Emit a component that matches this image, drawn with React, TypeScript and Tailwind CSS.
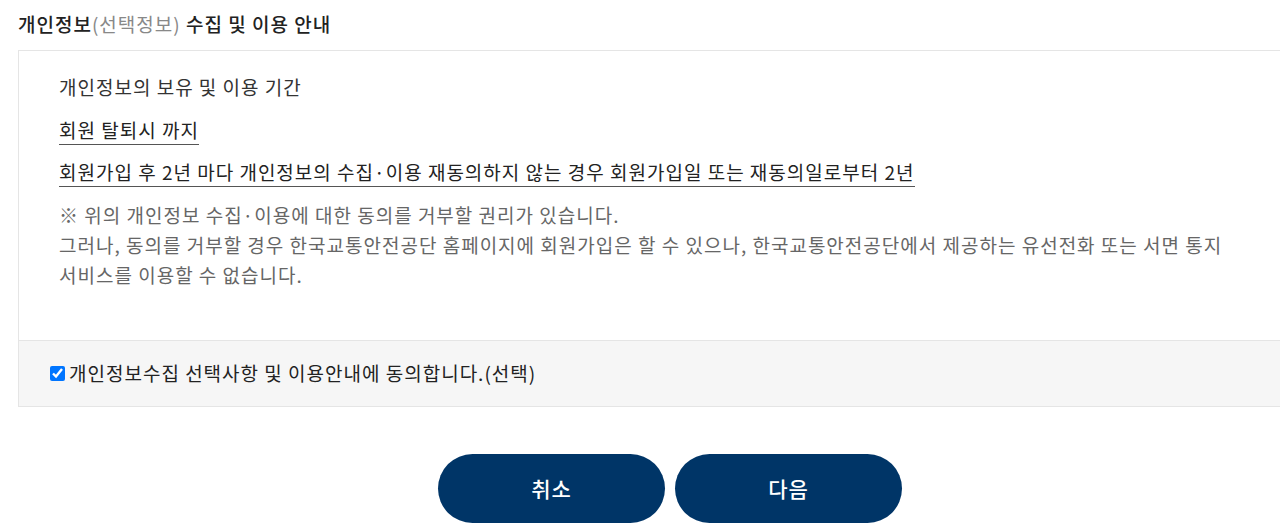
import React, { useState } from 'react';

const font = { fontFamily: '"Noto Sans CJK KR", "Noto Sans", sans-serif' };

export default function App() {
  const [agreed, setAgreed] = useState(true);

  return (
    <div className="w-full overflow-hidden bg-white tracking-[1px]" style={font}>
      <div className="ml-[18px] w-[1304px]">
        {/* Section title */}
        <h2 className="h-[50px] pt-[9px] text-[19px] leading-[30px] font-medium text-[#222]">
          개인정보<span className="font-normal text-[#888]">(선택정보)</span> 수집 및 이용 안내
        </h2>

        <div className="border border-[#e5e5e5]">
          <div className="px-[40px] pt-[21px] pb-[50px]">
            <p className="text-[19px] leading-[30px] text-[#333]">개인정보의 보유 및 이용 기간</p>

            <div className="mt-[14px]">
              <span className="inline-block border-b border-[#555] text-[19px] leading-[28px] text-[#222]">
                회원 탈퇴시 까지
              </span>
            </div>
            <div className="mt-[13px]">
              <span className="inline-block border-b border-[#555] text-[19px] leading-[28px] text-[#222]">
                회원가입 후 2년 마다 개인정보의 수집·이용 재동의하지 않는 경우 회원가입일 또는 재동의일로부터 2년
              </span>
            </div>

            <div className="mt-[13px] text-[19px] leading-[30px] text-[#666]">
              <p>※ 위의 개인정보 수집·이용에 대한 동의를 거부할 권리가 있습니다.</p>
              <p>
                그러나, 동의를 거부할 경우 한국교통안전공단 홈페이지에 회원가입은 할 수 있으나, 한국교통안전공단에서 제공하는 유선전화 또는 서면 통지
              </p>
              <p>서비스를 이용할 수 없습니다.</p>
            </div>
          </div>

          {/* Agreement row */}
          <div className="flex h-[66px] items-center border-t border-[#e5e5e5] bg-[#f6f6f6] pl-[31px]">
            <label className="flex cursor-pointer items-center gap-[4px] text-[19px] text-[#222]">
              <input
                type="checkbox"
                checked={agreed}
                onChange={(e) => setAgreed(e.target.checked)}
                className="h-[15px] w-[15px]"
              />
              <span>개인정보수집 선택사항 및 이용안내에 동의합니다.(선택)</span>
            </label>
          </div>
        </div>

        {/* Buttons */}
        <div className="mt-[47px] flex justify-center gap-[10px]">
          <button className="h-[69px] w-[227px] rounded-full bg-[#003567] text-[21px] font-medium text-white">
            취소
          </button>
          <button className="h-[69px] w-[227px] rounded-full bg-[#003567] text-[21px] font-medium text-white">
            다음
          </button>
        </div>
      </div>
    </div>
  );
}
